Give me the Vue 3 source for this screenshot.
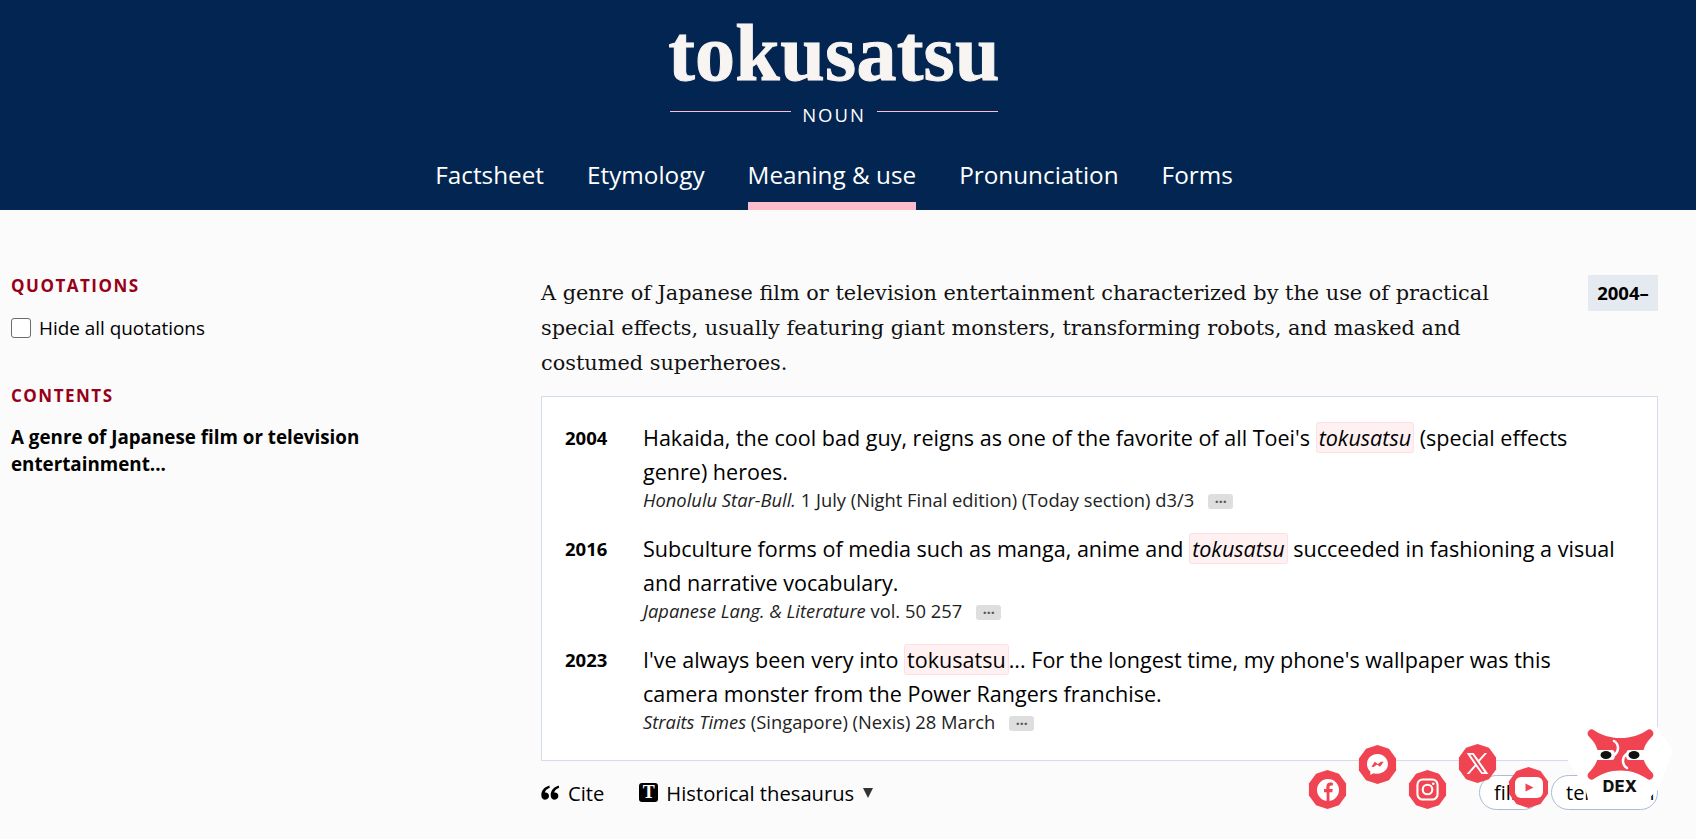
<script setup>
const tabs = ['Factsheet', 'Etymology', 'Meaning & use', 'Pronunciation', 'Forms'];

const quotes = [
  {
    year: '2004',
    before: "Hakaida, the cool bad guy, reigns as one of the favorite of all Toei's ",
    word: 'tokusatsu',
    italic: true,
    after: ' (special effects genre) heroes.',
    source: 'Honolulu Star-Bull.',
    rest: ' 1 July (Night Final edition) (Today section) d3/3',
  },
  {
    year: '2016',
    before: 'Subculture forms of media such as manga, anime and ',
    word: 'tokusatsu',
    italic: true,
    after: ' succeeded in fashioning a visual and narrative vocabulary.',
    source: 'Japanese Lang. & Literature',
    rest: ' vol. 50 257',
  },
  {
    year: '2023',
    before: "I've always been very into ",
    word: 'tokusatsu',
    italic: false,
    after: "... For the longest time, my phone's wallpaper was this camera monster from the Power Rangers franchise.",
    source: 'Straits Times',
    rest: ' (Singapore) (Nexis) 28 March',
  },
];
</script>

<template>
  <div class="page">
    <header class="hero">
      <h1 class="headword">tokusatsu</h1>
      <div class="pos">
        <span class="rule"></span>
        <span class="pos-label">NOUN</span>
        <span class="rule"></span>
      </div>
      <nav class="tabs">
        <a v-for="t in tabs" :key="t" class="tab" :class="{ active: t === 'Meaning & use' }">{{ t }}</a>
      </nav>
    </header>

    <div class="body">
      <aside class="side">
        <h2 class="side-title">QUOTATIONS</h2>
        <label class="hide-row">
          <span class="check"></span>
          Hide all quotations
        </label>
        <h2 class="side-title contents">CONTENTS</h2>
        <p class="toc">A genre of Japanese film or television entertainment...</p>
      </aside>

      <main class="main">
        <div class="def-row">
          <p class="definition">
            A genre of Japanese film or television entertainment characterized by the use of practical
            special effects, usually featuring giant monsters, transforming robots, and masked and
            costumed superheroes.
          </p>
          <span class="badge">2004–</span>
        </div>

        <section class="quotes">
          <div v-for="q in quotes" :key="q.year" class="quote">
            <div class="year">{{ q.year }}</div>
            <div class="quote-body">
              <p class="quote-text">{{ q.before }}<mark class="hit" :class="{ ital: q.italic }">{{ q.word }}</mark>{{ q.after }}</p>
              <p class="cite"><em>{{ q.source }}</em>{{ q.rest }}<span class="more">···</span></p>
            </div>
          </div>
        </section>

        <div class="foot">
          <span class="foot-item">
            <svg class="quote-ico" viewBox="0 0 20 16" width="19" height="15">
              <path d="M8.8.6C3.800 2.200.2 5.400.2 10.800c0 3 1.800 4.800 4.200 4.800 2.300 0 4-1.700 4-3.800 0-2.200-1.600-3.700-3.600-3.700-.4 0-.7.1-.9.2.4-2.400 2.300-4.300 5.300-5.400z" />
              <path d="M18.800.6C13.800 2.200 10.200 5.400 10.200 10.800c0 3 1.800 4.800 4.200 4.800 2.300 0 4-1.700 4-3.800 0-2.200-1.600-3.700-3.600-3.700-.4 0-.7.1-.9.2.4-2.400 2.300-4.300 5.300-5.400z" />
            </svg>
            Cite
          </span>
          <span class="foot-item">
            <span class="t-ico">T</span>
            Historical thesaurus
            <span class="caret"></span>
          </span>
          <div class="pills">
            <span class="pill pill-film">film</span>
            <span class="pill pill-tv">television</span>
          </div>
        </div>
      </main>
    </div>

    <!-- floating share widgets sit over the page -->
    <a class="social fb">
      <svg viewBox="0 0 24 24" width="22" height="22">
        <circle cx="12" cy="12" r="12" fill="#fff" />
        <path d="M13.600 24v-9.500h3.100l.5-3.500h-3.600V9c0-1.100.5-1.900 2.100-1.900h1.600V4.100c-.6-.1-1.500-.2-2.600-.2-2.800 0-4.500 1.700-4.500 4.600V11H7.600v3.500h2.900V24z" fill="#f04452" />
      </svg>
    </a>
    <a class="social ms">
      <svg viewBox="0 0 24 24" width="21" height="21">
        <path d="M12 0C5.300 0 0 4.900 0 11.500c0 3.400 1.400 6.400 3.800 8.400V24l3.700-2.100c1.400.4 2.900.6 4.500.6 6.700 0 12-4.900 12-11S18.700 0 12 0z" fill="#fff" />
        <path d="M5 14.800l3.900-6 3.500 2.600 3.700-2.600 3 0-4.200 5.800-3.500-2.600-3.800 2.800z" fill="#f04452" />
      </svg>
    </a>
    <a class="social ig">
      <svg viewBox="0 0 24 24" width="23" height="23" fill="none" stroke="#fff" stroke-width="2.200">
        <rect x="1.500" y="1.500" width="21" height="21" rx="5.500" />
        <circle cx="12" cy="12" r="5" />
        <circle cx="18" cy="6" r="1.400" fill="#fff" stroke="none" />
      </svg>
    </a>
    <a class="social xx">
      <svg viewBox="0 0 24 24" width="23" height="23">
        <path d="M.7 1h7.200l5.200 7.200L19.500 1H22l-7.800 8.900L23.300 23h-7.200l-5.800-8-7 8H.7l8.400-9.700zm3.700 1.800L17 21.200h2.300L6.800 2.800z" fill="#fff" />
      </svg>
    </a>
    <a class="social yt">
      <svg viewBox="0 0 28 21" width="28" height="21">
        <rect width="28" height="21" rx="6" fill="#fff" />
        <path d="M10.500 6.500l8 4-8 4z" fill="#f04452" />
      </svg>
    </a>
    <div class="dex">
      <svg viewBox="0 0 67 51" width="67" height="51">
        <path d="M2 1.500c1.500-1.500 3.500-1.500 5-.3C14 6 23 9 33.500 9S53 6 60 1.200c1.500-1.200 3.500-1.200 5 .3 1.800 1.800 1.800 4 .5 5.500C60.500 12 56 18 56 25.500S60.500 39 65.500 44c1.300 1.500 1.300 3.700-.5 5.500-1.500 1.500-3.500 1.500-5 .3C53 45 44 41.500 33.500 41.500S14 45 7 49.800c-1.500 1.200-3.500 1.200-5-.3-1.800-1.800-1.800-4-.5-5.500C6.500 39 11 33 11 25.500S6.500 12 1.500 7C.2 5.500.2 3.300 2 1.500z" fill="#f04452" />
        <path d="M8 21h17c2 0 3 2 3 5s-1 5-3 5H8zM59 21H42c-2 0-3 2-3 5s1 5 3 5h17z" fill="#fff" />
        <path d="M27 12c5 3 5.500 10 .5 14M40 39c-5-3-5.500-10-.5-14" fill="none" stroke="#fff" stroke-width="2.500" stroke-linecap="round" />
        <ellipse cx="19" cy="26" rx="5.500" ry="4" fill="#111" />
        <ellipse cx="47" cy="26" rx="5.500" ry="4" fill="#111" />
      </svg>
      <span class="dex-label">DEX</span>
    </div>
  </div>
</template>

<style>
html,
body {
  margin: 0;
  overflow: hidden;
  background: #fbfbfb;
}
</style>

<style scoped>
.page {
  position: relative;
  height: 839px;
  overflow: hidden;
  background: #fbfbfb;
  color: #000;
  font-family: "Open Sans", sans-serif;
}

.hero {
  height: 210px;
  background: #022551;
  display: flex;
  flex-direction: column;
  align-items: center;
  box-sizing: border-box;
  padding: 11px 28px 0 0;
}

.headword {
  margin: 0;
  font-family: "Liberation Serif", serif;
  font-weight: 700;
  font-size: 80px;
  line-height: 84px;
  color: #f8f4f2;
  letter-spacing: 0.3px;
  -webkit-text-stroke: 1px #f8f4f2;
}

.pos {
  display: flex;
  align-items: center;
  gap: 11px;
  width: 328px;
  margin-top: 8px;
}

.rule {
  flex: 1;
  height: 1px;
  margin-bottom: 7px;
  background: #ffbfcd;
}

.pos-label {
  color: #fff;
  font-size: 18.500px;
  line-height: 24px;
  letter-spacing: 2px;
}

.tabs {
  display: flex;
  gap: 43px;
  margin-top: 32px;
}

.tab {
  display: block;
  height: 51px;
  box-sizing: border-box;
  color: #fff;
  font-size: 24.300px;
  line-height: 32px;
  white-space: nowrap;
}

.tab.active {
  border-bottom: 8px solid #ffbccb;
}

.body {
  display: flex;
  padding: 0 38px 0 11px;
}

.side {
  width: 530px;
  flex: none;
  padding-top: 66px;
}

.side-title {
  margin: 0;
  color: #960018;
  font-size: 17px;
  line-height: 20px;
  font-weight: 700;
  letter-spacing: 1.500px;
}

.hide-row {
  display: flex;
  align-items: center;
  gap: 8px;
  margin-top: 19px;
  font-size: 18.900px;
  line-height: 26px;
}

.check {
  width: 18px;
  height: 18px;
  border: 1px solid #6b6b6b;
  border-radius: 3px;
  background: #fff;
}

.contents {
  margin-top: 45px;
}

.toc {
  margin: 18px 0 0;
  width: 380px;
  font-size: 18.800px;
  line-height: 27px;
  font-weight: 700;
}

.main {
  flex: 1;
  min-width: 0;
}

.def-row {
  display: flex;
  justify-content: space-between;
  align-items: flex-start;
  padding-top: 65px;
}

.definition {
  margin: 1px 0 0;
  width: 980px;
  font-family: "DejaVu Serif", serif;
  font-size: 20.830px;
  line-height: 35px;
  color: #111;
}

.badge {
  width: 70px;
  height: 36px;
  box-sizing: border-box;
  background: #e5eaf0;
  font-size: 18.500px;
  line-height: 36px;
  font-weight: 700;
  text-align: center;
}

.quotes {
  margin-top: 15px;
  height: 365px;
  box-sizing: border-box;
  background: #fff;
  border: 1px solid #d3deea;
  padding: 24px 22px 0 23px;
}

.quote {
  display: flex;
  margin-bottom: 20px;
}

.year {
  width: 78px;
  flex: none;
  font-size: 18.500px;
  line-height: 33px;
  font-weight: 700;
}

.quote-body {
  width: 982px;
  flex: none;
}

.quote-text {
  margin: 0;
  font-size: 21.560px;
  line-height: 33.500px;
}

.hit {
  background: #fff0f2;
  color: inherit;
  border: 1px solid #fde0e5;
  border-radius: 3px;
  padding: 0 2px;
}

.hit.ital {
  font-style: italic;
}

.cite {
  margin: 0;
  font-size: 18.350px;
  line-height: 24px;
  color: #222;
}

.more {
  display: inline-block;
  width: 25px;
  height: 15px;
  margin-left: 14px;
  border-radius: 3px;
  background: #dedede;
  text-align: center;
  font-size: 14px;
  line-height: 15px;
  font-weight: 700;
  color: #555;
}

.foot {
  display: flex;
  align-items: center;
  height: 35px;
  margin-top: 14px;
  font-size: 20.200px;
}

.foot-item {
  display: flex;
  align-items: center;
  gap: 8px;
  margin-right: 35px;
  white-space: nowrap;
}

.t-ico {
  width: 19px;
  height: 19px;
  border-radius: 3px;
  background: #000;
  color: #fff;
  font-family: "Liberation Serif", serif;
  font-weight: 700;
  font-size: 18px;
  line-height: 19px;
  text-align: center;
}

.caret {
  width: 0;
  height: 0;
  border-left: 5.500px solid transparent;
  border-right: 5.500px solid transparent;
  border-top: 10px solid #333;
  margin-left: 1px;
}

.pills {
  display: flex;
  gap: 10px;
  margin-left: auto;
}

.pill {
  height: 35px;
  box-sizing: border-box;
  border: 1px solid #a9bdd4;
  border-radius: 17.500px;
  background: #fff;
  line-height: 33px;
  padding: 0 14px;
  font-size: 20px;
}

.pill-film {
  width: 62px;
}

.pill-tv {
  width: 107px;
  overflow: hidden;
}

.social {
  position: absolute;
  width: 39px;
  height: 39px;
  display: flex;
  align-items: center;
  justify-content: center;
  background: #f04452;
  clip-path: polygon(50% 0, 79.400% 9.500%, 97.600% 34.500%, 97.600% 65.500%, 79.400% 90.500%, 50% 100%, 20.600% 90.500%, 2.400% 65.500%, 2.400% 34.500%, 20.600% 9.500%);
}

.fb { left: 1308px; top: 770px; }
.ms { left: 1358px; top: 745px; }
.ig { left: 1408px; top: 770px; }
.xx { left: 1458px; top: 744px; }
.yt { left: 1508px; top: 767px; width: 41px; height: 41px; }

.dex {
  position: absolute;
  left: 1566px;
  top: 714px;
  width: 108px;
  height: 94px;
  background: #fff;
  clip-path: polygon(24px 8px, 84px 2px, 107px 36px, 92px 76px, 74px 92px, 24px 92px, 18px 71px, 2px 48px, 2px 31px);
  display: flex;
  flex-direction: column;
  align-items: center;
  padding-top: 15px;
  box-sizing: border-box;
}

.dex-label {
  font-family: Inter, sans-serif;
  font-weight: 800;
  font-size: 16px;
  line-height: 13px;
  letter-spacing: 0.3px;
  color: #111;
}
</style>
